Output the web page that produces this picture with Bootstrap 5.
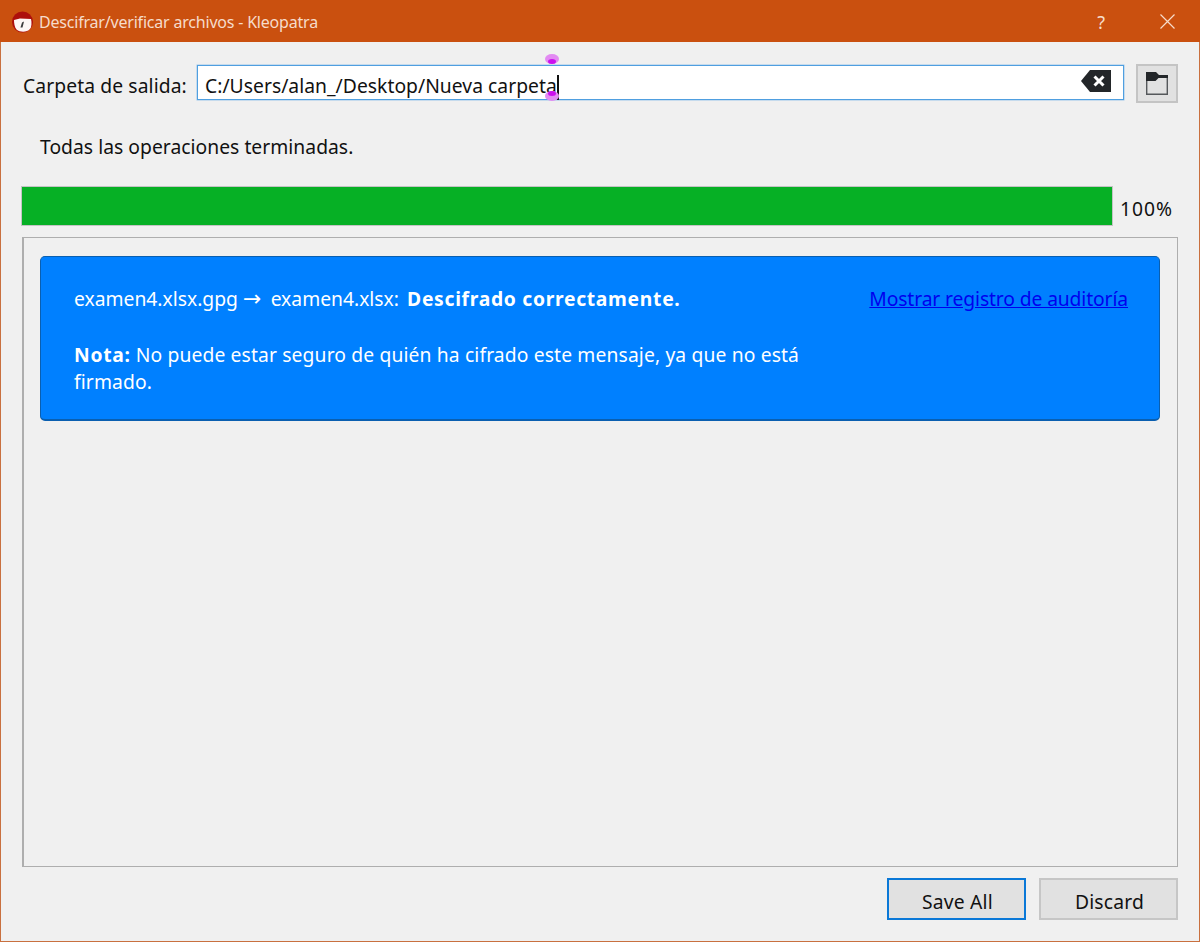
<!DOCTYPE html>
<html lang="es">
<head>
<meta charset="utf-8">
<title>Descifrar/verificar archivos - Kleopatra</title>
<link href="https://cdn.jsdelivr.net/npm/bootstrap@5.3.0/dist/css/bootstrap.min.css" rel="stylesheet">
<style>
html,body{height:100%;overflow:hidden}
body{background:#f0f0f0;font-family:"Noto Sans","Open Sans",sans-serif;font-size:19.3px;color:#111;line-height:26px}
.kwin{height:942px;border:1px solid #c9703f;border-top:0}
.ktitle{height:42px;background:#ca500f;color:#f6dccb;font-size:16px;padding-left:12px;padding-top:1px;margin:0 -1px;flex:none}
.ktitle-text{margin-left:6px;letter-spacing:-.2px}
.kq{font-size:18px;margin-right:55px;line-height:1}
.kclose{margin-right:25px}
.kbody{padding:22px 21px 21px 21px;min-height:0}
.kinputrow{height:40px;margin-bottom:0}
.klabel{width:175px;padding-left:1px;padding-top:4px;letter-spacing:.1px}
.kinputwrap{width:927px;height:35px;background:#fff;border:1px solid #4f9fe0;padding:0 26px 0 7px;position:relative;margin-top:-3px;box-shadow:0 0 0 .5px #9cc6ea}
.kfield{white-space:nowrap;padding-top:8px;letter-spacing:.03px}
.kcaret{display:inline-block;width:2px;height:25px;background:#111;vertical-align:-7px;margin-left:0}
.kdot{position:absolute;left:347px;width:14px;height:10px;border-radius:50%;background:#e28af2}
.kdot::after{content:"";position:absolute;left:3px;top:5px;width:8px;height:5px;border-radius:50%;background:#cc11ee}
.kdot-a{top:-12px}
.kdot-b{top:25px}
.kdot-b::after{top:0}
.kbtn-icon{width:42px;height:39px;background:#e1e1e1;border:2px solid #c4c4c4;margin-left:12px;padding:0}
.kback{margin-right:-14px;margin-bottom:3px}
.kstatus{padding-left:18px;margin-top:31px;height:25px;letter-spacing:.03px}
.kprog{margin-top:27px;height:40px}
.kbar{width:1092px;height:40px;margin-left:-1px;background:#06b025;border:1px solid #c4c4c4}
.kpct{margin-left:7px;letter-spacing:1px;padding-top:5px}
.kframe{margin-top:11px;height:630px;border:1px solid #aeaeae;border-left-width:2px;padding:18px 17px 0 16px;flex:none}
.kalert{height:165px;background:#0080ff;border:1px solid #0a5fb0;border-bottom-width:2px;border-radius:5px;color:#fff;padding:29px 31px 0 33px}
.kmsg{width:760px;letter-spacing:.13px}
.kmsg b{letter-spacing:.7px}
.kmsg p{margin:0}
.kfname{letter-spacing:0}
.kmsg .gap{margin-top:29px;line-height:27px}
.karrow{font-family:"DejaVu Sans",sans-serif;font-size:22px;letter-spacing:0;line-height:1;margin-right:4px}
.kresult{margin-left:3px}
.kaudit{color:#0000ee;text-decoration:underline;white-space:nowrap;letter-spacing:-.12px}
.kfoot{margin-top:11px}
.kbtn{width:139px;height:42px;background:#e1e1e1;border:2px solid #c6c6c6;font-size:19.3px;color:#111;border-radius:0;padding:5px 0 0 2px;letter-spacing:.2px}
.kbtn-pri{border-color:#0a78d7;margin-right:13px}
</style>
</head>
<body>
<div class="kwin d-flex flex-column">
  <div class="ktitle d-flex align-items-center">
    <svg width="21" height="22" viewBox="0 0 21 22" aria-hidden="true"><circle cx="10.5" cy="11" r="10.5" fill="#ad0f0c"/><path d="M2 9l6-1.500 11 .5c1 4 .5 8-1 10-3 3.500-10 3.500-13.500.5C2.500 16 2 12 2 9z" fill="#fdf7f5"/><path d="M10 11.500l2-1-1.500 6H8.500z" fill="#3b3b3b"/></svg>
    <span class="ktitle-text">Descifrar/verificar archivos - Kleopatra</span>
    <span class="kq ms-auto">?</span>
    <svg class="kclose" width="15" height="15" viewBox="0 0 15 15" aria-hidden="true"><path d="M.5.500l14 14M14.500.500l-14 14" stroke="#f6dccb" stroke-width="1.200" fill="none"/></svg>
  </div>
  <div class="kbody d-flex flex-column flex-grow-1">
    <div class="kinputrow d-flex align-items-center">
      <div class="klabel">Carpeta de salida:</div>
      <div class="kinputwrap d-flex align-items-center">
        <span class="kfield">C:/Users/alan_/Desktop/Nueva carpeta<span class="kcaret"></span></span>
        <span class="kdot kdot-a"></span><span class="kdot kdot-b"></span>
        <svg class="kback ms-auto" width="30" height="22" viewBox="0 0 30 22" aria-hidden="true"><path d="M9 0h21v22H9L0 11z" fill="#232629"/><path d="M13.500 6.500l9 9M22.500 6.500l-9 9" stroke="#fff" stroke-width="3"/></svg>
      </div>
      <button class="kbtn-icon d-flex align-items-center justify-content-center" type="button" aria-label="Examinar">
        <svg width="22" height="23" viewBox="0 0 22 23" aria-hidden="true"><path d="M.700 5v17.300h20.600V5" fill="none" stroke="#55585b" stroke-width="1.400"/><path d="M0 0h10l3 3h9v3H12.500l-3 3H0z" fill="#232629"/></svg>
      </button>
    </div>
    <div class="kstatus">Todas las operaciones terminadas.</div>
    <div class="kprog d-flex align-items-center">
      <div class="kbar"></div>
      <span class="kpct">100%</span>
    </div>
    <div class="kframe">
      <div class="kalert d-flex justify-content-between">
        <div class="kmsg">
          <p><span class="kfname">examen4.xlsx.gpg</span> <span class="karrow">→</span> <span class="kfname">examen4.xlsx:</span> <b class="kresult">Descifrado correctamente.</b></p>
          <p class="gap"><b>Nota:</b> No puede estar seguro de quién ha cifrado este mensaje, ya que no está<br>firmado.</p>
        </div>
        <a class="kaudit" href="#">Mostrar registro de auditoría</a>
      </div>
    </div>
    <div class="kfoot d-flex justify-content-end">
      <button class="kbtn kbtn-pri" type="button">Save All</button>
      <button class="kbtn" type="button">Discard</button>
    </div>
  </div>
</div>
</body>
</html>
